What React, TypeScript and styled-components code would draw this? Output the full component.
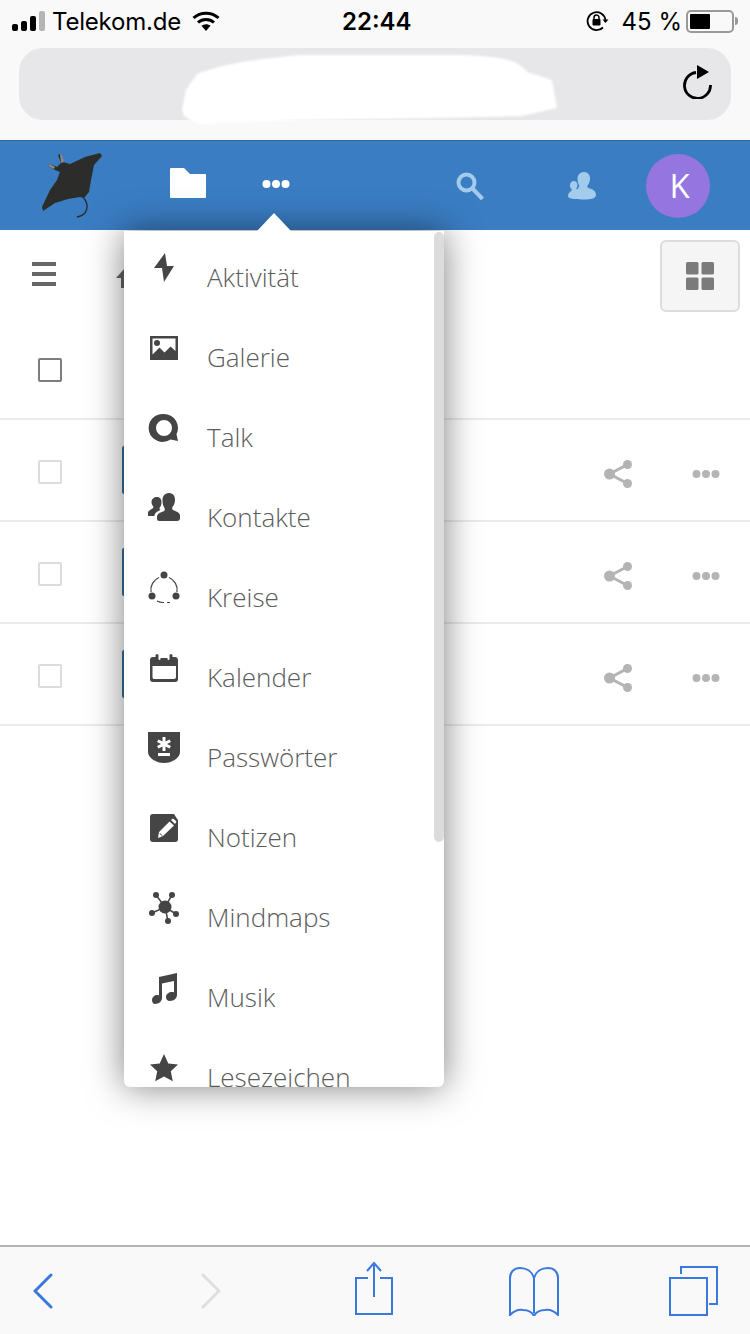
import React from "react";
import styled, { createGlobalStyle } from "styled-components";

const GlobalStyle = createGlobalStyle`
  html, body {
    margin: 0;
    padding: 0;
    background: #fff;
  }
  * {
    box-sizing: border-box;
  }
`;

const MENU_ITEMS: { label: string; icon: React.JSX.Element }[] = [
  {
    label: "Aktivität",
    icon: <path d="M15-2 4 13h8l2 14 10-16h-7z" />,
  },
  {
    label: "Galerie",
    icon: (
      <path
        transform="translate(0 1)"
        fillRule="evenodd"
        d="M0 0h28v24H0zM2.500 2.500v16l7-7 5 5 6-6 5 4.500V2.500zM7 4a3 3 0 1 1 0 6 3 3 0 0 1 0-6z"
      />
    ),
  },
  {
    label: "Talk",
    icon: (
      <path
        transform="translate(0 -1)"
        fillRule="evenodd"
        d="M14 0a14 14 0 0 1 12.500 20.300L28 27l-7.500-1.500A14 14 0 1 1 14 0zm0 6a8 8 0 1 0 0 16 8 8 0 0 0 0-16z"
      />
    ),
  },
  {
    label: "Kontakte",
    icon: (
      <path
        transform="translate(-2 -2)"
        d="M21 0c4 0 6 3 6 7 0 3-1 5-2.500 7-.5 1-.5 2 .5 3 2 1 6 2 7 5v3c0 2-1 3-3 3H11c-1 0-2-1-2-2v-3c1-3 5-4 7-5 1-1 1-2 .500-3C15 13 14.500 10 14.500 7c0-4 2.500-7 6.500-7zM9 4c3 0 4.500 2 4.500 5 0 3-1 5-2 6 0 1 0 1.500 1 2-2 1-5 2-6 5v1H0v-4c1-2 4-3 5-4 .5-.5.5-1 0-2-1-1-1.500-2.500-1.500-4C3.500 6 6 4 9 4z"
      />
    ),
  },
  {
    label: "Kreise",
    icon: (
      <>
        <circle cx="14" cy="0" r="3.500" />
        <circle cx="2" cy="21" r="3.500" />
        <circle cx="26" cy="21" r="3.500" />
        <path
          fill="none"
          stroke="#454545"
          strokeWidth="1.200"
          d="M9 2.500A13.500 13.500 0 0 0 1 17M19 2.500A13.500 13.500 0 0 1 27 17M7 26a14 14 0 0 0 7 1.500M17 27.500h3"
        />
      </>
    ),
  },
  {
    label: "Kalender",
    icon: (
      <path
        transform="translate(0 -1)"
        fillRule="evenodd"
        d="M3 3h2.500V1.500a1.500 1.500 0 0 1 3 0V5a1 1 0 0 0 2 0V4h7v1a1 1 0 0 0 2 0V1.500a1.500 1.500 0 0 1 3 0V3H25c2 0 3 1.500 3 3v19c0 2-1 3-3 3H3c-2 0-3-1-3-3V6c0-2 1-3 3-3zm-.5 9v11c0 1 .5 2 1.500 2h20c1 0 2-1 2-2V12z"
      />
    ),
  },
  {
    label: "Passwörter",
    icon: (
      <path
        transform="translate(-2 -3)"
        fillRule="evenodd"
        d="M0 0h32v20c0 6-8 11-16 11S0 26 0 20zm14.500 5v4.500l-4-2-1.500 2.500 4 2-4 2 1.500 2.500 4-2V19h3v-4.500l4 2 1.500-2.500-4-2 4-2-1.500-2.500-4 2V5zM10 21v3h12v-3z"
      />
    ),
  },
  {
    label: "Notizen",
    icon: (
      <g transform="translate(0 -1)">
        <path d="M3 0h21l2.500 4L28 6v19c0 2-1 3-3 3H3c-2 0-3-1-3-3V3c0-2 1-3 3-3z" />
        <path fill="#fff" d="m8 24 1-6L19.500 7.500l4.500 4L13 22zM25 10l-4-4 2-1.500 3.500 3z" />
        <path fill="#454545" d="m10 19 2.500 2.500-.5.5-2.500-2.500z" />
      </g>
    ),
  },
  {
    label: "Mindmaps",
    icon: (
      <>
        <circle cx="15" cy="12" r="6.500" />
        <circle cx="6" cy="0" r="3" />
        <circle cx="22" cy="0" r="3" />
        <circle cx="2" cy="18" r="3" />
        <circle cx="26" cy="19" r="3" />
        <circle cx="18" cy="26" r="3" />
        <path
          fill="none"
          stroke="#454545"
          strokeWidth="1.500"
          d="M6 0 15 12 22 0M2 18l13-6 11 7M15 12l3 14"
        />
      </>
    ),
  },
  {
    label: "Musik",
    icon: (
      <path
        transform="translate(2 -2)"
        d="M7 4 25 0v22c0 3-3 6-7 6-3 0-4-2-4-4 0-3 3-5 6-5 1 0 1.500 0 2 .5V8L10 10.500V25c0 3-3 6-7 6-2 0-3-2-3-4 0-3 3-5 5-5 1 0 1.500 0 2 .5z"
      />
    ),
  },
  {
    label: "Lesezeichen",
    icon: (
      <path
        transform="translate(0 -1)"
        d="m14 0 4.300 9.500L28 10.600l-7.200 6.700 2 10L14 22.400l-8.800 4.900 2-10L0 10.600l9.700-1.100z"
      />
    ),
  },
];

const ROWS = ["a", "b", "c"];

export default function App() {
  return (
    <>
      <GlobalStyle />
      <Page>
        <BrowserChrome>
          <StatusBar>
            <SignalBars>
              <Bar $h={7} />
              <Bar $h={10} />
              <Bar $h={15} />
              <Bar $h={20} $off />
            </SignalBars>
            <Carrier>Telekom.de</Carrier>
            <svg width="28" height="20" viewBox="0 0 28 20">
              <path
                fill="none"
                stroke="#000"
                strokeWidth="3"
                d="M1.500 7c7-6.500 18-6.500 25 0M6 11.500c4.500-4 11.500-4 16 0"
              />
              <path d="M9.500 14.800c2.800-2 6.200-2 9 0L14 20z" />
            </svg>
            <Clock>22:44</Clock>
            <StatusRight>
              <svg width="24" height="22" viewBox="0 0 24 22">
                <path
                  fill="none"
                  stroke="#000"
                  strokeWidth="1.800"
                  d="M19.500 10A9 9 0 1 0 17 17.500"
                />
                <path d="m16.500 9.500 6 0-3 3.500z" />
                <rect x="6.500" y="9" width="8" height="6.500" rx="1" />
                <path
                  fill="none"
                  stroke="#000"
                  strokeWidth="1.500"
                  d="M8 9V7.500a2.500 2.500 0 0 1 5 0V9"
                />
              </svg>
              <BatteryText>45 %</BatteryText>
              <Battery>
                <BatteryFill />
              </Battery>
              <BatteryTip />
            </StatusRight>
          </StatusBar>
          <UrlBar>
            <Redaction viewBox="0 0 378 76" width="378" height="76">
              <path d="M0 60 4 40 15 24C40 14 80 8 120 5L280 5C320 7 335 9 345 22L370 30 375 58 340 66 260 68 120 70 15 74 2 66Z" />
            </Redaction>
            <ReloadIcon viewBox="0 0 30 34" width="30" height="34">
              <path
                fill="none"
                stroke="#000"
                strokeWidth="2.800"
                d="M14 7.500A13 13 0 1 0 28.500 20"
              />
              <path d="M15 0l12 7-12 7z" />
            </ReloadIcon>
          </UrlBar>
        </BrowserChrome>

        <Content>
          <AppHeader>
            <Logo viewBox="0 0 66 72" width="66" height="72">
              <path
                fill="#2c2c2b"
                d="M20 4l3 8 7 2L45 7l15-4 2 3-8 9-3 15-2 12-5 6-4-1-12 2-13 4-12 8-1-4 8-17 7-10 3-8-5-2-7-4 2-2 7 3 4-4-3-8z"
              />
              <path
                fill="none"
                stroke="#2c2c2b"
                strokeWidth="1.300"
                d="M43 47c7 8 5 18-6 20"
              />
              <path fill="#8a8a80" d="m20 4 2 1 2 7-3 1zM8 16l2-2 5 3-1 2z" />
            </Logo>
            <FolderIcon viewBox="0 0 36 30" width="36" height="30">
              <path d="M1 0h13l6 6h15a1 1 0 0 1 1 1v22a1 1 0 0 1-1 1H1a1 1 0 0 1-1-1V1a1 1 0 0 1 1-1z" />
            </FolderIcon>
            <NavDots $color="#fff" $left={56} />
            <HeaderRight>
              <svg width="28" height="28" viewBox="0 0 28 28">
                <circle
                  cx="10.500"
                  cy="10.500"
                  r="8"
                  fill="none"
                  stroke="#a3cbeb"
                  strokeWidth="4"
                />
                <path stroke="#a3cbeb" strokeWidth="4" d="m16 16 10.500 11" />
              </svg>
              <svg width="28" height="28" viewBox="0 0 28 28" fill="#a3cbeb">
                <path d="M16 0c4 0 6 3 6 6.500 0 3-1 5-2.500 7-.5 1 0 2 1 2.500 3 1 7 2 7.500 6.500 0 2-1 3-3 4-4 1-10 1.500-15 .5-2 0-3 0-5 0-2-.5-5-1-5-3 0-3 2-4 3-5 1-.5 1-1 .5-2-1-1-1.500-2-1.500-3.500C2 10.500 3.500 9 6 9c2 0 3.500 2 3.500 4 0 1.500-.5 3-1.500 3.500.5 1 1.500 1 2 0 .5-1 1-2 1.500-2.500-1.500-2-2-5-2-7.500C9.500 3 12 0 16 0z" />
              </svg>
              <Avatar>K</Avatar>
            </HeaderRight>
          </AppHeader>

          <Controls>
            <HamburgerIcon>
              <span />
              <span />
              <span />
            </HamburgerIcon>
            <SortArrow viewBox="0 0 18 20" width="18" height="20">
              <path d="M9 0 0 10h5v10h8V10h5z" />
            </SortArrow>
            <ViewButton>
              <svg width="28" height="28" viewBox="0 0 28 28" fill="#7b7b7b">
                <rect width="12.500" height="12.500" rx="1.500" />
                <rect x="15.500" width="12.500" height="12.500" rx="1.500" />
                <rect y="15.500" width="12.500" height="12.500" rx="1.500" />
                <rect x="15.500" y="15.500" width="12.500" height="12.500" rx="1.500" />
              </svg>
            </ViewButton>
          </Controls>

          <TableHead>
            <Checkbox $dark />
          </TableHead>
          {ROWS.map((row) => (
            <FileRow key={row}>
              <Checkbox />
              <Thumb />
              <RowActions>
                <ShareIcon />
                <Dots $color="#b4b4b4" $left={0} />
              </RowActions>
            </FileRow>
          ))}

          <MenuCaret />
          <Menu>
            <MenuList>
              {MENU_ITEMS.map((item) => (
                <MenuItem key={item.label}>
                  <MenuIcon>
                    <MenuSvg viewBox="0 0 32 32" width="32" height="32">
                      {item.icon}
                    </MenuSvg>
                  </MenuIcon>
                  <MenuLabel>{item.label}</MenuLabel>
                </MenuItem>
              ))}
            </MenuList>
            <ScrollThumb />
          </Menu>
        </Content>

        <Toolbar>
          <ToolIcon $left={33}>
            <svg width="20" height="36" viewBox="0 0 20 36">
              <path
                fill="none"
                stroke="#3b78dd"
                strokeWidth="3"
                strokeLinecap="round"
                d="M18 2 2 18l16 16"
              />
            </svg>
          </ToolIcon>
          <ToolIcon $left={148}>
            <svg width="20" height="36" viewBox="0 0 20 36">
              <path
                fill="none"
                stroke="#dfdfdf"
                strokeWidth="3"
                strokeLinecap="round"
                d="m2 2 16 16L2 34"
              />
            </svg>
          </ToolIcon>
          <ToolIcon $left={133} $lift={6}>
            <svg width="40" height="54" viewBox="0 0 40 54">
              <path
                fill="none"
                stroke="#3b78dd"
                strokeWidth="2"
                d="M14 17H2v36h36V17H26M20 36V2M13 10l7-8 7 8"
              />
            </svg>
          </ToolIcon>
          <ToolIcon $left={114}>
            <svg width="52" height="50" viewBox="0 0 52 50">
              <path
                fill="none"
                stroke="#3b78dd"
                strokeWidth="2"
                d="M26 47V12C24 5 18 2 12 2 6 2 2 6 2 12v37c4-4 8-6 13-5 5 0 9 2 11 6 2-4 6-6 11-6 5-1 9 1 13 5V12c0-6-4-10-10-10-6 0-12 3-14 10"
              />
            </svg>
          </ToolIcon>
          <ToolIcon $left={108}>
            <svg width="50" height="50" viewBox="0 0 50 50">
              <path
                fill="none"
                stroke="#3b78dd"
                strokeWidth="2"
                d="M2 12h37v37H2zM13 8V1h36v37h-8"
              />
            </svg>
          </ToolIcon>
        </Toolbar>
      </Page>
    </>
  );
}

const DotsRow = ({ className }: { className?: string }) => (
  <svg className={className} width="28" height="10" viewBox="0 0 28 10">
    <circle cx="4.500" cy="5" r="4" />
    <circle cx="14" cy="5" r="4" />
    <circle cx="23.500" cy="5" r="4" />
  </svg>
);

const ShareIcon = () => (
  <svg width="28" height="28" viewBox="0 0 28 28" fill="#b4b4b4">
    <circle cx="5.500" cy="14" r="5.500" />
    <circle cx="23.500" cy="4.500" r="4.500" />
    <circle cx="23.500" cy="23.500" r="4.500" />
    <path
      fill="none"
      stroke="#b4b4b4"
      strokeWidth="3"
      d="M23.500 4.500 5.500 14l18 9.500"
    />
  </svg>
);

const Page = styled.div`
  width: 750px;
  height: 1334px;
  display: flex;
  flex-direction: column;
  overflow: hidden;
  background: #fff;
  font-family: "Open Sans", "Liberation Sans", sans-serif;
`;

const BrowserChrome = styled.div`
  height: 140px;
  flex-shrink: 0;
  background: #f9f9f9;
  display: flex;
  flex-direction: column;
`;

const StatusBar = styled.div`
  height: 48px;
  display: flex;
  align-items: center;
  padding: 0 0 6px 12px;
  font-family: Inter, "Liberation Sans", sans-serif;
  color: #000;
  position: relative;
`;

const SignalBars = styled.div`
  display: flex;
  align-items: flex-end;
  gap: 3px;
  width: 33px;
`;

const Bar = styled.span<{ $h: number; $off?: boolean }>`
  width: 6px;
  height: ${({ $h }) => $h}px;
  border-radius: 2px;
  background: ${({ $off }) => ($off ? "#b5b5b5" : "#000")};
`;

const Carrier = styled.span`
  font-size: 24px;
  margin: 0 11px 0 7px;
  letter-spacing: -0.2px;
`;

const Clock = styled.span`
  position: absolute;
  left: 342px;
  font-size: 24px;
  font-weight: 600;
`;

const StatusRight = styled.div`
  margin-left: auto;
  margin-right: 12px;
  display: flex;
  align-items: center;
`;

const BatteryText = styled.span`
  font-size: 24px;
  margin: 0 4px 0 12px;
`;

const Battery = styled.div`
  width: 48px;
  height: 23px;
  border: 2px solid #999;
  border-radius: 5px;
  padding: 2px;
`;

const BatteryFill = styled.div`
  width: 20px;
  height: 100%;
  background: #000;
  border-radius: 1px;
`;

const BatteryTip = styled.div`
  width: 3px;
  height: 8px;
  margin-left: 1px;
  background: #999;
  border-radius: 0 3px 3px 0;
`;

const UrlBar = styled.div`
  height: 72px;
  margin: 0 19px;
  border-radius: 24px;
  background: #e7e7e9;
  display: flex;
  align-items: center;
  justify-content: flex-end;
  padding-right: 19px;
  position: relative;
`;

const Redaction = styled.svg`
  position: absolute;
  left: 163px;
  top: 2px;
  fill: #fff;
  filter: blur(1px);
`;

const ReloadIcon = styled.svg`
  position: relative;
  top: -2px;
`;

const Content = styled.main`
  flex: 1;
  min-height: 0;
  position: relative;
  display: flex;
  flex-direction: column;
`;

const AppHeader = styled.header`
  height: 90px;
  flex-shrink: 0;
  background: #3a7dc3;
  border-top: 1px solid #2c699f;
  display: flex;
  align-items: center;
  padding: 0 40px;
`;

const Logo = styled.svg`
  flex-shrink: 0;
  margin-top: 1px;
`;

const FolderIcon = styled.svg`
  fill: #fff;
  margin-left: 64px;
  margin-top: -6px;
`;

const Dots = styled(DotsRow)<{ $color: string; $left: number }>`
  fill: ${({ $color }) => $color};
  margin-left: ${({ $left }) => $left}px;
`;

const NavDots = styled(Dots)`
  margin-top: -4px;
`;

const HeaderRight = styled.div`
  margin-left: auto;
  display: flex;
  align-items: center;
  gap: 84px;
`;

const Avatar = styled.div`
  width: 64px;
  height: 64px;
  margin-left: -34px;
  padding-left: 3px;
  border-radius: 50%;
  background: #9575e0;
  color: #fff;
  font-family: "Open Sans", "Liberation Sans", sans-serif;
  font-size: 33px;
  display: flex;
  align-items: center;
  justify-content: center;
`;

const Controls = styled.div`
  height: 90px;
  flex-shrink: 0;
  display: flex;
  align-items: flex-start;
  padding: 10px 10px 0 32px;
`;

const HamburgerIcon = styled.div`
  width: 24px;
  margin-top: 22px;
  display: flex;
  flex-direction: column;
  gap: 6px;

  span {
    height: 4px;
    background: #666;
  }
`;

const SortArrow = styled.svg`
  fill: #666;
  margin: 28px 0 0 60px;
`;

const ViewButton = styled.div`
  width: 80px;
  height: 72px;
  margin-left: auto;
  border: 2px solid #dcdcdc;
  border-radius: 6px;
  background: #f5f5f5;
  display: flex;
  align-items: center;
  justify-content: center;
`;

const TableHead = styled.div`
  height: 100px;
  flex-shrink: 0;
  display: flex;
  align-items: center;
  padding: 2px 0 0 38px;
  border-bottom: 2px solid #ebebeb;
`;

const FileRow = styled.div`
  height: 102px;
  flex-shrink: 0;
  display: flex;
  align-items: center;
  padding: 0 30px 0 38px;
  border-bottom: 2px solid #ebebeb;
`;

const Checkbox = styled.div<{ $dark?: boolean }>`
  width: 24px;
  height: 24px;
  flex-shrink: 0;
  margin-top: ${({ $dark }) => ($dark ? 0 : 4)}px;
  border: 2px solid ${({ $dark }) => ($dark ? "#7d7d7d" : "#dcdcdc")};
  border-radius: 2px;
  background: #fff;
`;

const Thumb = styled.div`
  width: 40px;
  height: 48px;
  margin-left: 60px;
  background: #38709f;
  border-radius: 2px;
`;

const RowActions = styled.div`
  margin-left: auto;
  margin-top: 8px;
  display: flex;
  align-items: center;
  gap: 60px;
`;

const MenuCaret = styled.div`
  position: absolute;
  left: 257px;
  top: 73px;
  width: 0;
  height: 0;
  z-index: 3;
  border-left: 17px solid transparent;
  border-right: 17px solid transparent;
  border-bottom: 18px solid #fff;
`;

const Menu = styled.nav`
  position: absolute;
  left: 124px;
  top: 91px;
  width: 320px;
  height: 856px;
  z-index: 2;
  overflow: hidden;
  background: #fff;
  border-radius: 0 0 6px 6px;
  box-shadow: 0 0 36px rgba(0, 0, 0, 0.5);
`;

const MenuList = styled.ul`
  list-style: none;
  margin: 0;
  padding: 6px 0 0 26px;
`;

const MenuItem = styled.li`
  height: 80px;
  display: flex;
  align-items: center;
`;

const MenuIcon = styled.span`
  width: 32px;
  height: 32px;
  align-self: flex-start;
  margin-top: 18px;
  flex-shrink: 0;
`;

const MenuSvg = styled.svg`
  display: block;
  overflow: visible;
  fill: #454545;
`;

const MenuLabel = styled.span`
  margin-left: 25px;
  font-size: 26px;
  font-weight: 300;
  color: #5c5c5c;
`;

const ScrollThumb = styled.div`
  position: absolute;
  top: 1px;
  right: 0;
  width: 10px;
  height: 610px;
  background: #dcdcdc;
  border-radius: 5px;
`;

const Toolbar = styled.footer`
  height: 89px;
  flex-shrink: 0;
  margin-top: -1px;
  background: #f9f9f9;
  border-top: 2px solid #b4b4b4;
  display: flex;
  align-items: center;
`;

const ToolIcon = styled.span<{ $left: number; $lift?: number }>`
  display: flex;
  margin-left: ${({ $left }) => $left}px;
  margin-bottom: ${({ $lift }) => $lift ?? 0}px;
`;
